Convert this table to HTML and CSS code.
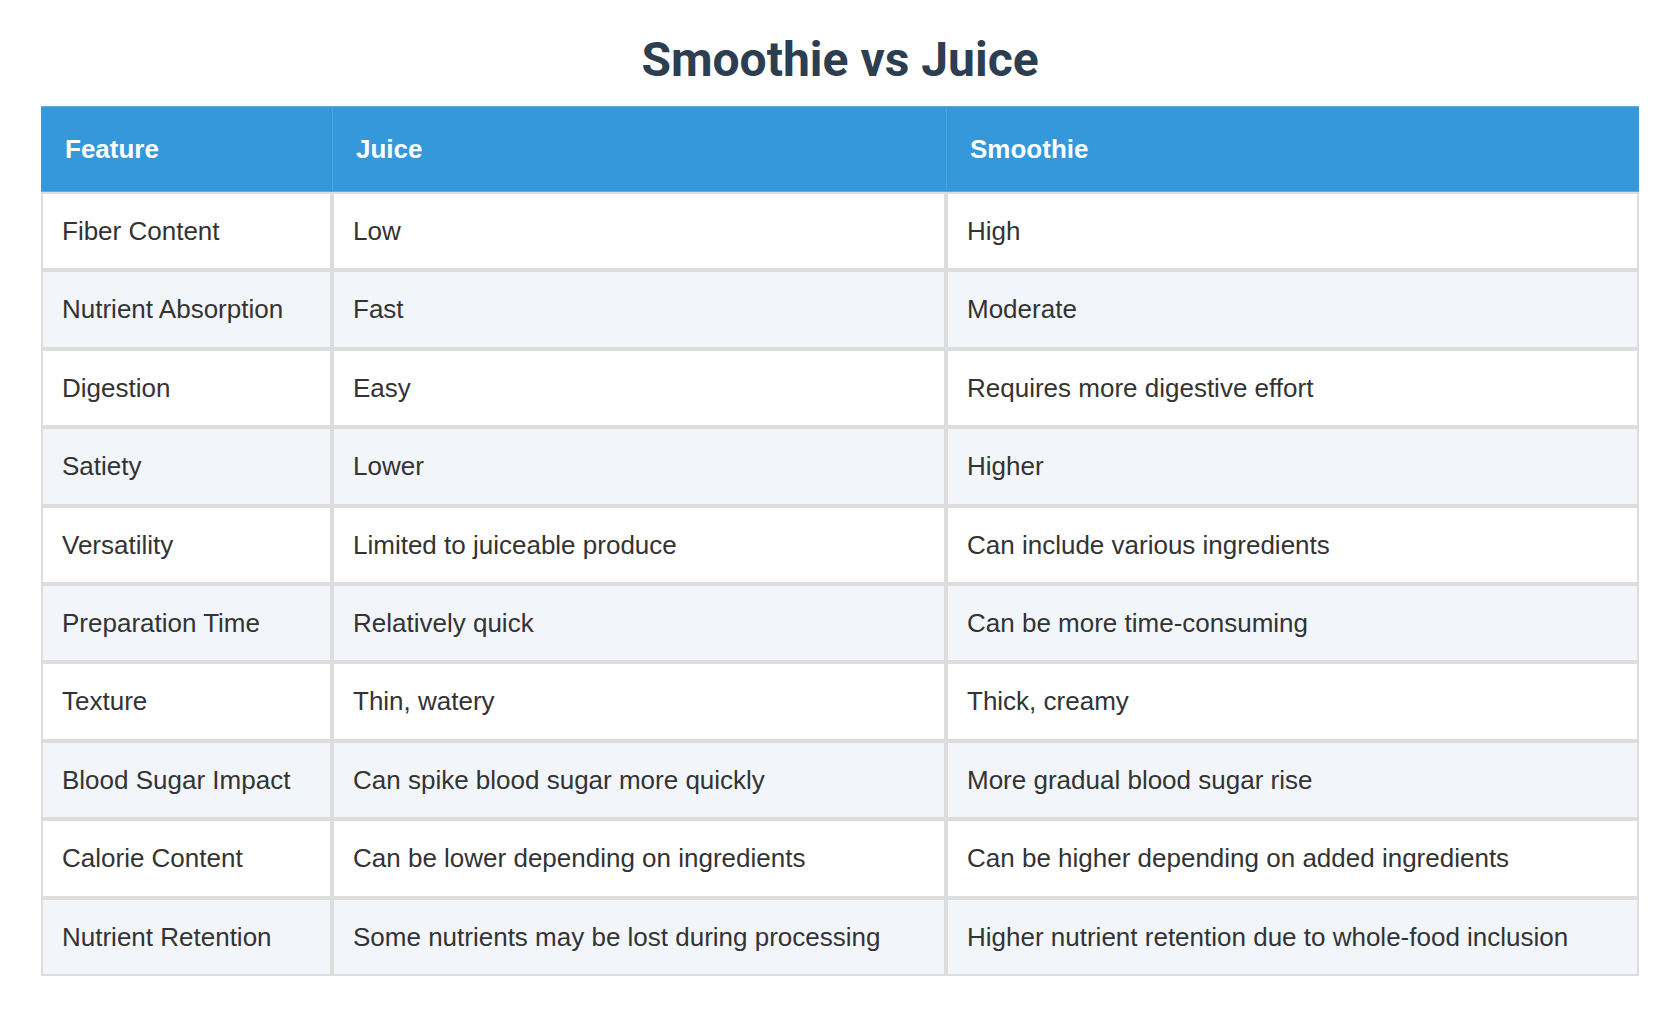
FILE: index.html
```html
<!DOCTYPE html>
<html lang="en">
<head>
<meta charset="utf-8">
<title>Smoothie vs Juice</title>
<link rel="stylesheet" href="styles.css">
</head>
<body>
<main class="page">
  <h1 class="title">Smoothie vs Juice</h1>
  <table class="compare">
    <colgroup>
      <col class="col-feature">
      <col class="col-juice">
      <col class="col-smoothie">
    </colgroup>
    <thead>
      <tr><th>Feature</th><th>Juice</th><th>Smoothie</th></tr>
    </thead>
    <tbody>
      <tr><td>Fiber Content</td><td>Low</td><td>High</td></tr>
      <tr><td>Nutrient Absorption</td><td>Fast</td><td>Moderate</td></tr>
      <tr><td>Digestion</td><td>Easy</td><td>Requires more digestive effort</td></tr>
      <tr><td>Satiety</td><td>Lower</td><td>Higher</td></tr>
      <tr><td>Versatility</td><td>Limited to juiceable produce</td><td>Can include various ingredients</td></tr>
      <tr><td>Preparation Time</td><td>Relatively quick</td><td>Can be more time-consuming</td></tr>
      <tr><td>Texture</td><td>Thin, watery</td><td>Thick, creamy</td></tr>
      <tr><td>Blood Sugar Impact</td><td>Can spike blood sugar more quickly</td><td>More gradual blood sugar rise</td></tr>
      <tr><td>Calorie Content</td><td>Can be lower depending on ingredients</td><td>Can be higher depending on added ingredients</td></tr>
      <tr><td>Nutrient Retention</td><td>Some nutrients may be lost during processing</td><td>Higher nutrient retention due to whole-food inclusion</td></tr>
    </tbody>
  </table>
</main>
</body>
</html>
```

FILE: styles.css
```css
html, body {
  margin: 0;
  padding: 0;
  background: #ffffff;
}

.page {
  padding: 32px 41px 0 41px;
  font-family: "Liberation Sans", Arial, sans-serif;
}

.title {
  margin: 0 0 18px 0;
  font-family: Roboto, "Liberation Sans", sans-serif;
  font-weight: 700;
  font-size: 48px;
  line-height: 56px;
  color: #2c3e50;
  text-align: center;
}

.compare {
  width: 100%;
  table-layout: fixed;
  border-collapse: separate;
  border-spacing: 0;
  font-size: 26px;
  color: #333333;
}

.col-feature { width: 291px; }
.col-juice { width: 614px; }

.compare th {
  background: #3498db;
  color: #ffffff;
  font-weight: 700;
  text-align: left;
  line-height: 30px;
  padding: 27px 20px 27px 23px;
  border-top: 1px solid #5dade2;
  border-bottom: 1px solid #5dade2;
  border-left: 1px solid #4aa3df;
}

.compare th:first-child {
  border-left: none;
  padding-left: 24px;
}

.compare td {
  background: #ffffff;
  text-align: left;
  line-height: 30.4px;
  padding: 22px 20px 22px 19px;
  border: 2px solid #dddddd;
}

.compare tbody tr:nth-child(even) td {
  background: #f2f5fa;
}
```
